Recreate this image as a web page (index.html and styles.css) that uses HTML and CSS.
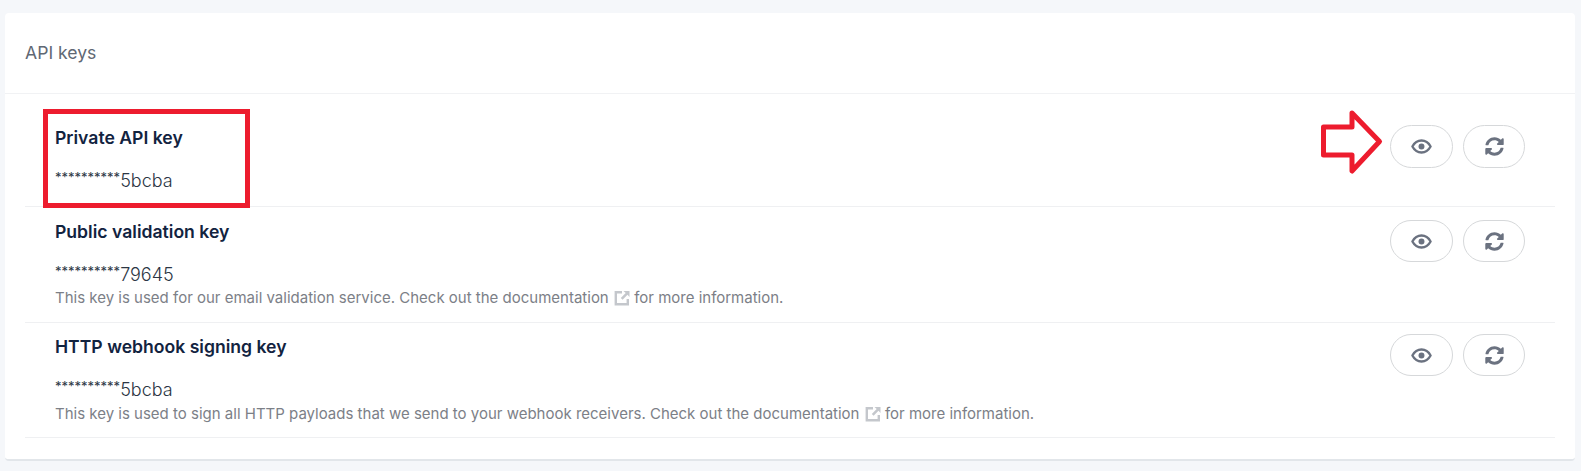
FILE: index.html
```html
<!DOCTYPE html>
<html lang="en">
<head>
<meta charset="utf-8">
<title>API keys</title>
<link rel="stylesheet" href="styles.css">
</head>
<body>
<svg width="0" height="0" class="defs" aria-hidden="true">
  <symbol id="eye" viewBox="0 0 24 24"><path d="M1.600 12C4 7.600 7.700 5.200 12 5.200s8 2.400 10.400 6.800C20 16.400 16.300 18.800 12 18.800S4 16.400 1.600 12Z" fill="none" stroke="currentColor" stroke-width="2.700" stroke-linejoin="round"/><circle cx="12" cy="12" r="3.400" fill="currentColor"/></symbol>
  <symbol id="sync" viewBox="0 0 512 512"><path fill="currentColor" d="M370.72 133.28C339.458 104.008 298.888 87.962 255.848 88c-77.458.068-144.328 53.178-162.791 126.85-1.344 5.363-6.122 9.15-11.651 9.15H24.103c-7.498 0-13.194-6.807-11.807-14.176C33.933 94.924 134.813 8 256 8c66.448 0 126.791 26.136 171.315 68.685L463.03 40.97C478.149 25.851 504 36.559 504 57.941V192c0 13.255-10.745 24-24 24H345.941c-21.382 0-32.09-25.851-16.971-40.971l41.75-41.749zM32 296h134.059c21.382 0 32.09 25.851 16.971 40.971l-41.75 41.75c31.262 29.273 71.835 45.319 114.876 45.28 77.418-.07 144.315-53.144 162.787-126.849 1.344-5.363 6.122-9.15 11.651-9.15h57.304c7.498 0 13.194 6.807 11.807 14.176C478.067 417.076 377.187 504 256 504c-66.448 0-126.791-26.136-171.315-68.685L48.97 471.03C33.851 486.149 8 475.441 8 454.059V320c0-13.255 10.745-24 24-24z"/></symbol>
  <symbol id="ext" viewBox="0 0 16 16"><path fill="none" stroke="currentColor" stroke-width="2.400" d="M8 2.200H1.800v12h12V9"/><path fill="currentColor" d="M9.500 1h6v6L13.500 4.800 8.600 9.800 6.800 8l4.900-4.900z"/></symbol>
</svg>
<main class="card">
  <h1 class="card-title">API keys</h1>
  <section class="rows">
    <div class="row row-first">
      <div class="info">
        <h2 class="key-name">Private API key</h2>
        <p class="key-value"><span class="stars">**********</span>5bcba</p>
      </div>
      <div class="actions">
        <button class="btn"><svg class="icon-eye"><use href="#eye"/></svg></button>
        <button class="btn"><svg class="icon-sync"><use href="#sync"/></svg></button>
      </div>
    </div>
    <div class="row row-middle">
      <div class="info">
        <h2 class="key-name">Public validation key</h2>
        <p class="key-value"><span class="stars">**********</span>79645</p>
        <p class="note">This key is used for our email validation service. Check out the documentation <svg class="icon-ext"><use href="#ext"/></svg> for more information.</p>
      </div>
      <div class="actions">
        <button class="btn"><svg class="icon-eye"><use href="#eye"/></svg></button>
        <button class="btn"><svg class="icon-sync"><use href="#sync"/></svg></button>
      </div>
    </div>
    <div class="row row-last">
      <div class="info">
        <h2 class="key-name">HTTP webhook signing key</h2>
        <p class="key-value"><span class="stars">**********</span>5bcba</p>
        <p class="note">This key is used to sign all HTTP payloads that we send to your webhook receivers. Check out the documentation <svg class="icon-ext"><use href="#ext"/></svg> for more information.</p>
      </div>
      <div class="actions">
        <button class="btn"><svg class="icon-eye"><use href="#eye"/></svg></button>
        <button class="btn"><svg class="icon-sync"><use href="#sync"/></svg></button>
      </div>
    </div>
  </section>
</main>
<div class="mark-box"></div>
<svg class="mark-arrow" width="66" height="66" viewBox="0 0 66 66"><path d="M3.500 18H32V4L59.500 32.500 32 62V46H3.500Z" fill="none" stroke="#ed1c2e" stroke-width="5" stroke-linejoin="round"/></svg>
</body>
</html>
```
FILE: styles.css
```css
* { box-sizing: border-box; }
html, body { margin: 0; height: 100%; }
body {
  position: relative;
  background: #f5f7fa;
  padding: 13px 6px 0 5px;
  font-family: Inter, "Liberation Sans", sans-serif;
  overflow: hidden;
}
.defs { position: absolute; }
.card {
  height: 448px;
  background: #fff;
  border-radius: 4px;
  border-bottom: 2px solid #e2e6ea;
}
.card-title {
  margin: 0;
  height: 81px;
  padding: 30px 20px 0;
  font-size: 17.6px;
  line-height: 20px;
  font-weight: 400;
  color: #5f6874;
  border-bottom: 1px solid #f1f2f4;
}
.rows { padding: 0 20px; }
.row {
  display: flex;
  justify-content: space-between;
  align-items: flex-start;
  height: 115px;
  padding: 12px 30px 0;
  border-bottom: 1px solid #eff0f2;
}
.row-first { height: 113px; padding-top: 31px; }
.row-middle { height: 116px; padding-top: 13px; }
.row-first .info { padding-top: 1px; }
.key-name {
  margin: 0;
  font-size: 17.6px;
  line-height: 24px;
  font-weight: 600;
  color: #12233f;
}
.key-value {
  margin: 19px 0 0;
  font-size: 18px;
  line-height: 24px;
  font-weight: 300;
  color: #2c3644;
}
.stars { font-size: 13px; position: relative; top: -5px; font-weight: 400; }
.note {
  margin: 0;
  font-size: 15px;
  line-height: 22px;
  color: #7c8087;
}
.row-middle .note { margin-top: -1px; }
.actions { display: flex; gap: 10px; }
.row-last .actions { margin-top: -1px; }
.btn {
  display: flex;
  align-items: center;
  justify-content: center;
  width: 63px;
  height: 43px;
  padding: 0;
  background: #fff;
  border: 1px solid #d6d8da;
  border-radius: 22px;
  color: #6b7280;
}
.row-middle .btn, .row-last .btn { height: 42px; }
.btn + .btn { width: 62px; }
.icon-eye { width: 21px; height: 21px; }
.icon-sync { width: 19px; height: 19px; }
.icon-ext { width: 16px; height: 16px; vertical-align: -3px; margin-left: 1px; color: #c4c7cc; }
.mark-box {
  position: absolute;
  left: 43px;
  top: 109px;
  width: 207px;
  height: 99px;
  border: 5px solid #ed1c2e;
}
.mark-arrow { position: absolute; left: 1320px; top: 109px; }
```
